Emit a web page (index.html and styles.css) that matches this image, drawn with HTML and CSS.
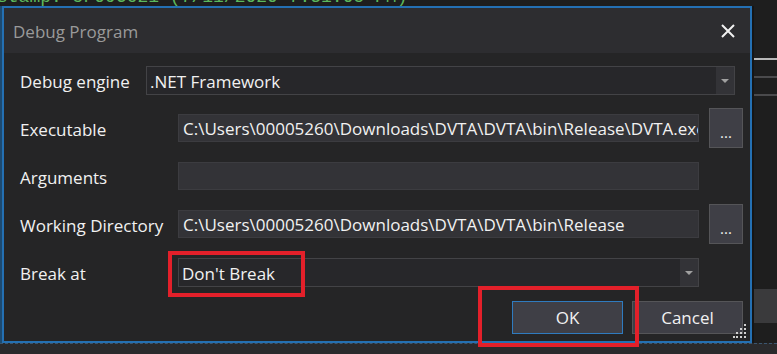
FILE: index.html
```html
<!DOCTYPE html>
<html lang="en">
<head>
    <meta charset="UTF-8">
    <meta name="viewport" content="width=device-width, initial-scale=1.0">
    <title>Debug Program</title>
    <link rel="stylesheet" href="styles.css">
</head>
<body>
    <div class="desk">
        <div class="console"><span>stamp: 5F09C621 (7/11/2020 7:31:05 PM)</span></div>
        <div class="gutter"></div>

        <div class="dialog">
            <div class="titlebar">
                <span class="title">Debug Program</span>
                <button class="close" aria-label="Close">
                    <svg width="14" height="14" viewBox="0 0 14 14">
                        <path d="M1 1 L13 13 M13 1 L1 13" stroke="#f1f1f1" stroke-width="2" fill="none"/>
                    </svg>
                </button>
            </div>

            <div class="form">
                <label class="label">Debug engine</label>
                <div class="combo wide">
                    <span class="value">.NET Framework</span>
                    <span class="arrow"></span>
                </div>

                <label class="label span2">Executable</label>
                <div class="textbox">C:\Users\00005260\Downloads\DVTA\DVTA\bin\Release\DVTA.exe</div>
                <button class="browse">...</button>

                <label class="label span2">Arguments</label>
                <div class="textbox"></div>
                <div></div>

                <label class="label span2">Working Directory</label>
                <div class="textbox">C:\Users\00005260\Downloads\DVTA\DVTA\bin\Release</div>
                <button class="browse">...</button>

                <label class="label span2">Break at</label>
                <div class="combo">
                    <span class="value">Don't Break</span>
                    <span class="arrow"></span>
                </div>
            </div>

            <div class="actions">
                <button class="btn primary">OK</button>
                <button class="btn">Cancel</button>
            </div>

            <!-- resize grip -->
            <svg class="grip" width="14" height="14" viewBox="0 0 14 14">
                <rect x="11" y="0" width="2" height="2" fill="#d0d0d0"/>
                <rect x="7" y="4" width="2" height="2" fill="#d0d0d0"/>
                <rect x="11" y="4" width="2" height="2" fill="#d0d0d0"/>
                <rect x="3" y="8" width="2" height="2" fill="#d0d0d0"/>
                <rect x="7" y="8" width="2" height="2" fill="#d0d0d0"/>
                <rect x="11" y="8" width="2" height="2" fill="#d0d0d0"/>
                <rect x="0" y="12" width="2" height="2" fill="#d0d0d0"/>
                <rect x="3" y="12" width="2" height="2" fill="#d0d0d0"/>
                <rect x="7" y="12" width="2" height="2" fill="#d0d0d0"/>
                <rect x="11" y="12" width="2" height="2" fill="#d0d0d0"/>
            </svg>

            <!-- red highlight marks -->
            <div class="mark mark-break"></div>
            <div class="mark mark-ok"></div>
        </div>

        <div class="side">
            <div class="side-line bright"></div>
            <div class="side-line"></div>
            <div class="side-line"></div>
            <div class="side-fill"></div>
            <div class="side-block"></div>
        </div>

        <div class="floor"></div>
    </div>
</body>
</html>
```

FILE: styles.css
```css
body {
    margin: 0;
    background: #1e1e1e;
    font-family: 'Open Sans', 'Noto Sans', sans-serif;
    overflow: hidden;
}

.desk {
    display: grid;
    grid-template-columns: 2px 750px 1fr;
    grid-template-rows: 6px 337px 1fr;
    height: 100vh;
}

.console {
    grid-column: 1 / 4;
    overflow: hidden;
    position: relative;
}

.console span {
    display: block;
    margin-left: -3px;
    margin-top: -12px;
    font-family: 'Liberation Mono', monospace;
    font-size: 18px;
    line-height: 18px;
    color: #5cb85c;
    white-space: nowrap;
}

.gutter {
    background: #1d4a70;
}

.dialog {
    position: relative;
    border: 2px solid #2470b3;
    background: #252526;
    display: flex;
    flex-direction: column;
    color: #f1f1f1;
}

.titlebar {
    height: 45px;
    background: #2d2d30;
    display: flex;
    align-items: center;
    justify-content: space-between;
    padding: 0 15px 0 9px;
}

.title {
    color: #9a9a9a;
    font-size: 17px;
    padding-top: 2px;
}

.close {
    background: none;
    border: none;
    padding: 0;
    width: 14px;
    height: 14px;
    display: flex;
}

.form {
    display: grid;
    grid-template-columns: 126px 32px 521px 44px;
    grid-auto-rows: 48px;
    align-items: center;
    padding: 3px 0 0 16px;
}

.label {
    font-size: 17px;
    color: #f1f1f1;
    padding-top: 3px;
}

.span2 {
    grid-column: span 2;
}

.textbox {
    height: 28px;
    box-sizing: border-box;
    background: #333337;
    border: 1px solid #3c3c40;
    padding: 1px 4px 0;
    font-size: 17px;
    line-height: 26px;
    white-space: nowrap;
    overflow: hidden;
}

.combo {
    height: 29px;
    box-sizing: border-box;
    background: #27272a;
    border: 1px solid #434346;
    display: flex;
    align-items: stretch;
    font-size: 17px;
}

.combo.wide {
    grid-column: 2 / 5;
    margin-right: 8px;
}

.combo .value {
    flex: 1;
    padding: 1px 0 0 3px;
    line-height: 27px;
}

.combo .arrow {
    width: 18px;
    background: #333337;
    position: relative;
}

.combo .arrow::after {
    content: '';
    position: absolute;
    left: 5px;
    top: 12px;
    border-left: 4px solid transparent;
    border-right: 4px solid transparent;
    border-top: 4px solid #a0a0a0;
}

.browse {
    justify-self: end;
    width: 34px;
    height: 40px;
    background: #3f3f46;
    border: 1px solid #555558;
    color: #f1f1f1;
    font-family: inherit;
    font-size: 15px;
    padding: 7px 0 0;
}

.actions {
    display: flex;
    justify-content: flex-end;
    gap: 9px;
    margin-top: 5px;
    padding-right: 7px;
}

.btn {
    width: 111px;
    height: 33px;
    background: #3f3f46;
    border: 1px solid #555558;
    color: #f1f1f1;
    font-family: inherit;
    font-size: 17px;
}

.btn.primary {
    border-color: #2f7bbf;
}

.grip {
    position: absolute;
    right: 3px;
    bottom: 3px;
}

.mark {
    position: absolute;
    border: 4px solid #e3202a;
    box-sizing: border-box;
}

.mark-break {
    left: 164px;
    top: 243px;
    width: 137px;
    height: 46px;
}

.mark-ok {
    left: 474px;
    top: 278px;
    width: 161px;
    height: 61px;
    z-index: 2;
}

.side {
    display: flex;
    flex-direction: column;
    border-left: 2px solid #151515;
}

.side-line {
    height: 2px;
    background: #4a4a4c;
    margin-top: 16px;
}

.side-line.bright {
    background: #b8b8b8;
    margin-top: 52px;
}

.side-fill {
    flex: 1;
}

.side-block {
    height: 34px;
    margin-bottom: 20px;
    background: #3a3a3c;
}

.floor {
    grid-column: 1 / 4;
    background: #2a2a2c;
    border-top: 1px dashed #3b5670;
}
```
